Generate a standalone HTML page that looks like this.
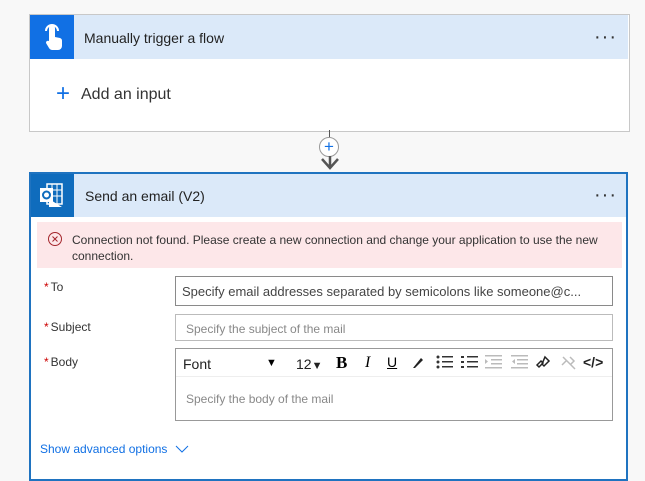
<!DOCTYPE html><html><head><style>
body{margin:0;width:645px;height:481px;background:#f8f8f8;font-family:"Liberation Sans",sans-serif;position:relative;overflow:hidden}
.a{position:absolute}
.card{background:#fff;border:1px solid #c8c8c8}
.hdr{background:#dbe9f9}
.lbl{font-size:12px;color:#333}
.lbl b{color:#c00;font-weight:normal;margin-right:2px}
.inp{border:1px solid #8a8a8a;background:#fff;box-sizing:border-box}
.ph{color:#888;font-size:12px}
.tb{font-size:14px;color:#222}
.dots{font-size:20px;color:#333;letter-spacing:1px;line-height:10px}
</style></head><body>
<div class="a card" style="left:29px;top:14px;width:599px;height:116px"></div>
<div class="a hdr" style="left:30px;top:15px;width:598px;height:44px"></div>
<div class="a" style="left:30px;top:15px;width:44px;height:44px;background:#1170e4">
<svg width="44" height="44"><path d="M19 23 V13 a3 3 0 0 1 6 0 V22 l5 1 a3 3 0 0 1 2 3 v5 a4 4 0 0 1 -4 4 h-6 a4 4 0 0 1 -3 -2 l-3 -5 a2 2 0 0 1 3 -2z" fill="#fff"/><path d="M16 16 a6 6 0 0 1 12 0" stroke="#fff" stroke-width="2" fill="none"/></svg></div>
<div class="a" style="left:84px;top:30px;font-size:14px;color:#222">Manually trigger a flow</div>
<div class="a dots" style="left:594px;top:32px">···</div>
<div class="a" style="left:56px;top:80px;font-size:24px;color:#1170e4;line-height:28px">+</div>
<div class="a" style="left:81px;top:86px;font-size:16px;color:#333">Add an input</div>
<div class="a" style="left:329px;top:130px;width:1px;height:7px;background:#555"></div>
<div class="a" style="left:319px;top:137px;width:20px;height:20px;border:1px solid #999;border-radius:50%;background:#fff;box-sizing:border-box;text-align:center;line-height:17px;color:#1170e4;font-size:17px">+</div>
<svg class="a" style="left:320px;top:156px" width="20" height="14"><path d="M2 3 L10 12 L18 3 M10 0 V12" stroke="#555" stroke-width="2.5" fill="none"/></svg>
<div class="a" style="left:29px;top:172px;width:599px;height:309px;background:#fff;border:2px solid #1f73c0;box-sizing:border-box"></div>
<div class="a hdr" style="left:31px;top:174px;width:595px;height:43px"></div>
<div class="a" style="left:31px;top:174px;width:43px;height:43px;background:#0f6cbd">
<svg width="43" height="43"><rect x="16" y="10" width="15" height="20" fill="none" stroke="#fff" stroke-width="1.5"/><path d="M16 16h15M16 22h15M21 10v20M26 10v20" stroke="#fff"/><path d="M18 25 l13 8 h-13z" fill="#fff"/><rect x="9" y="14" width="13" height="14" fill="#fff"/><circle cx="15.5" cy="21" r="3.5" fill="none" stroke="#0f6cbd" stroke-width="2"/></svg></div>
<div class="a" style="left:85px;top:188px;font-size:14px;color:#222">Send an email (V2)</div>
<div class="a dots" style="left:594px;top:190px">···</div>
<div class="a" style="left:37px;top:222px;width:585px;height:46px;background:#fde7e9"></div>
<svg class="a" style="left:47px;top:231px" width="16" height="16"><circle cx="8" cy="8" r="6.5" fill="none" stroke="#a4262c"/><path d="M5.5 5.5 l5 5 M10.5 5.5 l-5 5" stroke="#a4262c"/></svg>
<div class="a" style="left:72px;top:232px;width:540px;font-size:12px;color:#333;line-height:16px">Connection not found. Please create a new connection and change your application to use the new connection.</div>
<div class="a lbl" style="left:44px;top:280px"><b>*</b>To</div>
<div class="a inp" style="left:175px;top:276px;width:438px;height:30px"></div>
<div class="a" style="left:182px;top:284px;font-size:13px;color:#444;width:425px;white-space:nowrap;overflow:hidden">Specify email addresses separated by semicolons like someone@c...</div>
<div class="a lbl" style="left:44px;top:320px"><b>*</b>Subject</div>
<div class="a inp" style="left:175px;top:314px;width:438px;height:27px;border-color:#bbb"></div>
<div class="a ph" style="left:186px;top:322px">Specify the subject of the mail</div>
<div class="a lbl" style="left:44px;top:355px"><b>*</b>Body</div>
<div class="a inp" style="left:175px;top:348px;width:438px;height:73px;border-color:#999"></div>
<div class="a" style="left:176px;top:349px;width:436px;height:27px;border-bottom:1px solid #eee"></div>
<div class="a tb" style="left:183px;top:356px">Font</div>
<div class="a" style="left:266px;top:357px;font-size:11px">▼</div>
<div class="a tb" style="left:296px;top:356px">12<span style="font-size:11px">▼</span></div>
<div class="a" style="left:336px;top:353px;font-size:17px;font-weight:bold;font-family:'Liberation Serif',serif">B</div>
<div class="a" style="left:365px;top:354px;font-size:16px;font-style:italic;font-family:'Liberation Serif',serif">I</div>
<div class="a" style="left:387px;top:354px;font-size:14px;text-decoration:underline">U</div>
<svg class="a" style="left:410px;top:354px" width="16" height="16"><path d="M3 14 L11 4 l2 2 L5 14z" fill="#222"/></svg>
<svg class="a" style="left:435px;top:354px" width="20" height="16"><g fill="#333"><circle cx="3" cy="3" r="1.5"/><circle cx="3" cy="8" r="1.5"/><circle cx="3" cy="13" r="1.5"/><rect x="7" y="2" width="11" height="1.5"/><rect x="7" y="7" width="11" height="1.5"/><rect x="7" y="12" width="11" height="1.5"/></g></svg>
<svg class="a" style="left:460px;top:354px" width="20" height="16"><g fill="#333"><rect x="1" y="2" width="3" height="2"/><rect x="1" y="7" width="3" height="2"/><rect x="1" y="12" width="3" height="2"/><rect x="7" y="2" width="11" height="1.5"/><rect x="7" y="7" width="11" height="1.5"/><rect x="7" y="12" width="11" height="1.5"/></g></svg>
<svg class="a" style="left:484px;top:354px" width="20" height="16"><g fill="#bbb"><rect x="1" y="1" width="17" height="1.5"/><rect x="7" y="5" width="11" height="1.5"/><rect x="7" y="9" width="11" height="1.5"/><rect x="1" y="13" width="17" height="1.5"/><path d="M1 5 l3 2.5 -3 2.5z"/></g></svg>
<svg class="a" style="left:510px;top:354px" width="20" height="16"><g fill="#bbb"><rect x="1" y="1" width="17" height="1.5"/><rect x="7" y="5" width="11" height="1.5"/><rect x="7" y="9" width="11" height="1.5"/><rect x="1" y="13" width="17" height="1.5"/><path d="M5 5 l-3 2.5 3 2.5z"/></g></svg>
<svg class="a" style="left:535px;top:354px" width="18" height="16"><path d="M4 13 l4-4 M10 3 l4 4 -5 5 -2-2z M2 11 l4-4 2 2 -4 4z" stroke="#222" stroke-width="1.5" fill="none"/></svg>
<svg class="a" style="left:560px;top:354px" width="18" height="16"><path d="M10 3 l4 4 -3 3 M2 11 l4-4 M3 3 l12 12" stroke="#bbb" stroke-width="1.5" fill="none"/></svg>
<div class="a" style="left:583px;top:354px;font-size:14px;font-weight:bold;color:#222">&lt;/&gt;</div>
<div class="a ph" style="left:186px;top:392px">Specify the body of the mail</div>
<div class="a" style="left:40px;top:442px;font-size:12px;color:#1170e4">Show advanced options</div>
<svg class="a" style="left:175px;top:444px" width="14" height="10"><path d="M1 2 L7 8 L13 2" stroke="#1170e4" fill="none"/></svg>
</body></html>
